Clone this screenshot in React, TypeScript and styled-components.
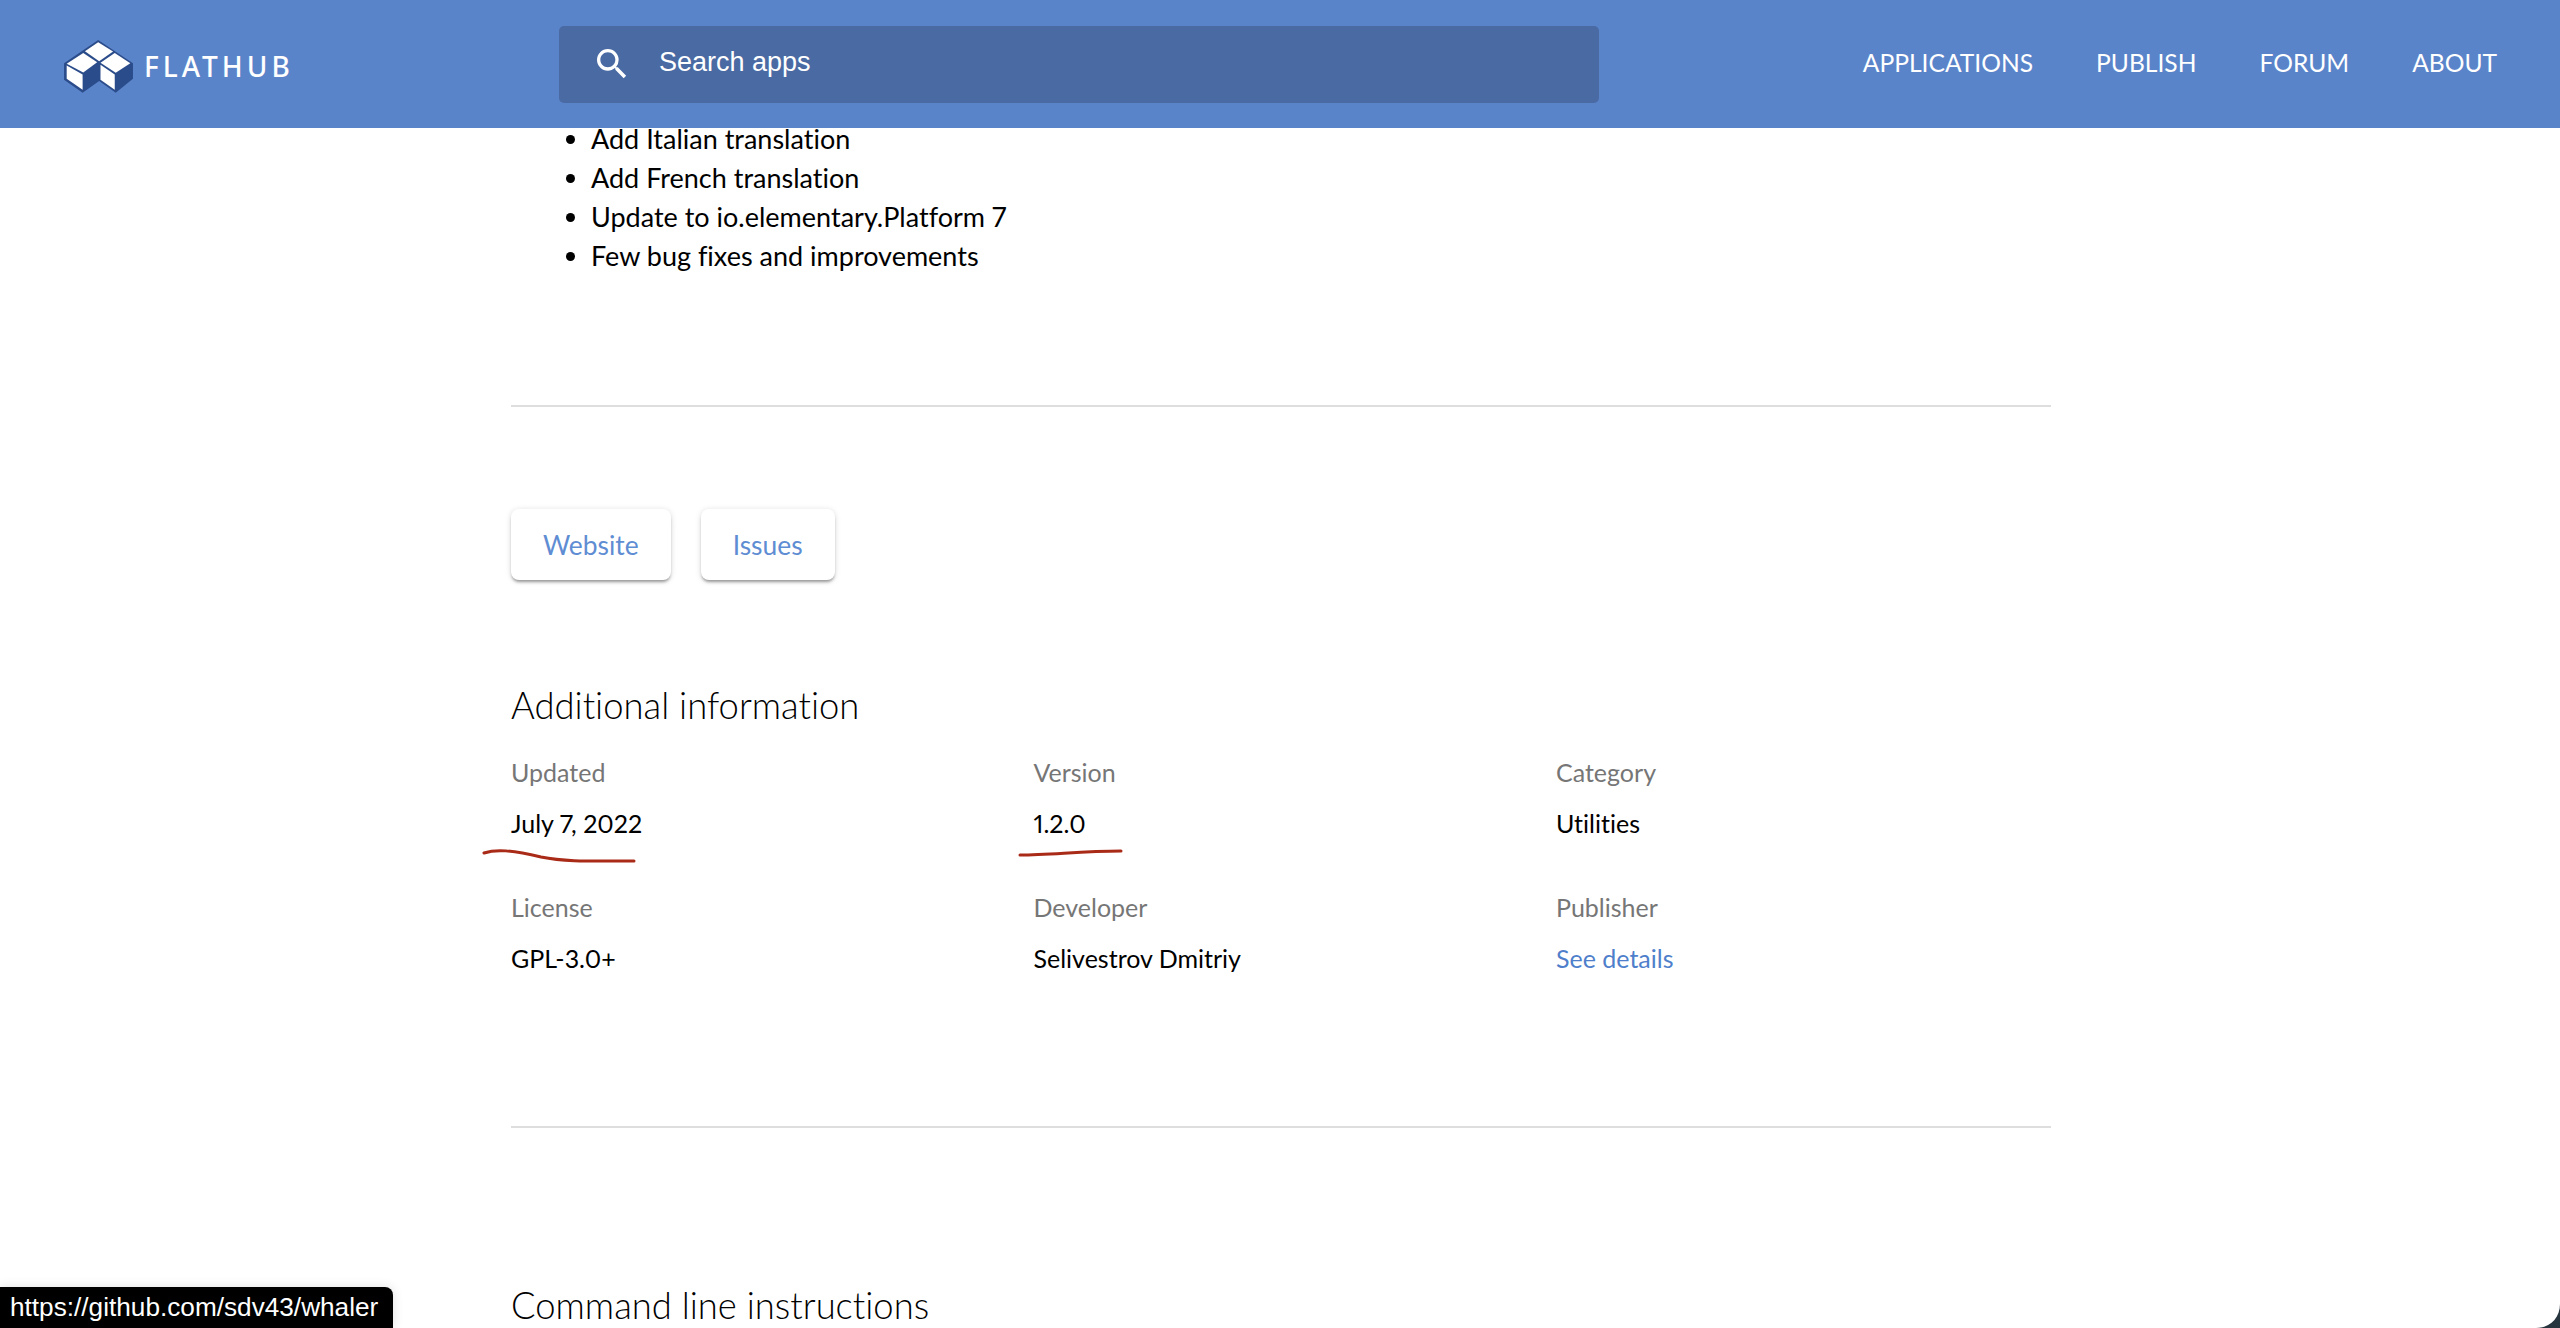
import React from 'react'
import styled, { createGlobalStyle } from 'styled-components'

const bodyFont = `Lato, 'Noto Sans', sans-serif`

const GlobalStyle = createGlobalStyle`
  html, body {
    margin: 0;
    padding: 0;
    background: #ffffff;
  }
  body {
    font-family: ${bodyFont};
    font-variant-ligatures: none;
    font-variant-numeric: proportional-nums;
    color: #000000;
  }
`

const fields = [
  { label: 'Updated', value: 'July 7, 2022' },
  { label: 'Version', value: '1.2.0' },
  { label: 'Category', value: 'Utilities' },
  { label: 'License', value: 'GPL-3.0+' },
  { label: 'Developer', value: 'Selivestrov Dmitriy' },
  { label: 'Publisher', value: 'See details', link: true },
]

const changes = [
  'Add Italian translation',
  'Add French translation',
  'Update to io.elementary.Platform 7',
  'Few bug fixes and improvements',
]

function Logo() {
  return (
    <LogoSvg viewBox='72 58 208 160' aria-hidden='true'>
      <path
        fill='#2b4c8a'
        d='M175 58 L280 128 L280 175 L228 217 L178 182 L128 217 L72 178 L72 128 Z'
      />
      <path fill='#ffffff' d='M135 92 L175 65 L220 93 L178 122 Z' />
      <path fill='#ffffff' d='M80 130 L130 97 L172 125 L130 156 Z' />
      <path fill='#ffffff' d='M182 127 L225 97 L272 128 L228 157 Z' />
      <path fill='#ffffff' d='M80 135 L128 162 L128 208 L80 175 Z' />
      <path fill='#ffffff' d='M182 133 L225 162 L225 208 L182 178 Z' />
    </LogoSvg>
  )
}

function SearchIcon() {
  return (
    <SearchSvg viewBox='0 0 24 24' aria-hidden='true'>
      <path
        fill='#ffffff'
        d='M15.5 14h-.79l-.28-.27A6.47 6.47 0 0 0 16 9.5 6.5 6.5 0 1 0 9.5 16c1.61 0 3.09-.59 4.23-1.57l.27.28v.79l5 4.99L20.49 19l-4.99-5zm-6 0C7.01 14 5 11.99 5 9.5S7.01 5 9.5 5 14 7.01 14 9.5 11.99 14 9.5 14z'
      />
    </SearchSvg>
  )
}

export default function App() {
  return (
    <Page>
      <GlobalStyle />
      <Header>
        <Brand>
          <Logo />
          <BrandName>FLATHUB</BrandName>
        </Brand>
        <SearchBox>
          <SearchIcon />
          <SearchText>Search apps</SearchText>
        </SearchBox>
        <Nav>
          <NavLink href='#'>Applications</NavLink>
          <NavLink href='#'>Publish</NavLink>
          <NavLink href='#'>Forum</NavLink>
          <NavLink href='#'>About</NavLink>
        </Nav>
      </Header>
      <Main>
        <ChangeList>
          {changes.map((c) => (
            <li key={c}>{c}</li>
          ))}
        </ChangeList>
        <Rule $top={130} />
        <Buttons>
          <LinkButton href='#'>Website</LinkButton>
          <LinkButton href='#'>Issues</LinkButton>
        </Buttons>
        <Heading $top={101}>Additional information</Heading>
        <InfoGrid>
          {fields.map((f) => (
            <Field key={f.label}>
              <FieldLabel>{f.label}</FieldLabel>
              <FieldValue $link={f.link}>{f.value}</FieldValue>
            </Field>
          ))}
          <Scribble viewBox='0 0 660 30' aria-hidden='true'>
            <path d='M3 7 C 15 3, 30 4, 60 11 C 85 16, 110 15, 153 15' />
            <path d='M539 9 C 570 9, 600 5, 640 5' />
          </Scribble>
        </InfoGrid>
        <Rule $top={149} />
        <Heading $top={153}>Command line instructions</Heading>
      </Main>
      <StatusBubble>https://github.com/sdv43/whaler</StatusBubble>
      <CornerSvg viewBox='0 0 24 24' aria-hidden='true'>
        <path fill='#27353f' d='M24 0 L24 24 L0 24 C 14 24, 24 14, 24 0 Z' />
      </CornerSvg>
    </Page>
  )
}

const Page = styled.div`
  position: relative;
  height: 1328px;
  overflow: hidden;
  background: #ffffff;
`

const Header = styled.header`
  display: flex;
  align-items: center;
  height: 128px;
  padding: 0 63px 0 64px;
  box-sizing: border-box;
  background: #5a84ca;
  color: #ffffff;
`

const Brand = styled.div`
  display: flex;
  align-items: center;
  gap: 11px;
  width: 495px;
  flex: none;
  padding-top: 4px;
  box-sizing: border-box;
`

const LogoSvg = styled.svg`
  width: 69px;
  height: 53px;
  flex: none;
`

const BrandName = styled.span`
  font-family: 'Noto Sans', sans-serif;
  font-size: 28px;
  font-weight: 500;
  letter-spacing: 4px;
  line-height: 1;
`

const SearchBox = styled.div`
  display: flex;
  align-items: center;
  width: 1040px;
  height: 77px;
  padding: 0 0 0 33px;
  box-sizing: border-box;
  flex: none;
  background: #4a6aa3;
  border-radius: 5px;
`

const SearchSvg = styled.svg`
  width: 40px;
  height: 40px;
  flex: none;
`

const SearchText = styled.span`
  margin-left: 27px;
  font-family: 'Liberation Sans', Arial, sans-serif;
  font-size: 27px;
  margin-top: -3px;
`

const Nav = styled.nav`
  display: flex;
  gap: 63px;
  margin-left: auto;
  margin-top: -1px;
`

const NavLink = styled.a`
  color: #ffffff;
  text-decoration: none;
  text-transform: uppercase;
  font-family: ${bodyFont};
  font-size: 24.6px;
  font-weight: 400;
  line-height: 1;
`

const Main = styled.main`
  width: 1540px;
  margin: -9px auto 0;
  transform: translateX(1px);
`

const ChangeList = styled.ul`
  margin: 0;
  padding: 0 0 0 80px;
  font-size: 27px;
  line-height: 39px;
`

const Rule = styled.hr<{ $top: number }>`
  border: 0;
  height: 2px;
  margin: ${(p) => p.$top}px 0 0;
  background: #dedede;
`

const Buttons = styled.div`
  display: flex;
  gap: 30px;
  margin-top: 102px;
`

const LinkButton = styled.a`
  display: flex;
  align-items: center;
  height: 71px;
  padding: 0 32px;
  background: #ffffff;
  border-radius: 8px;
  box-shadow: 0 3px 3px -1px rgba(0, 0, 0, 0.35), 0 1px 6px rgba(0, 0, 0, 0.14);
  color: #5f8dd3;
  font-size: 26.4px;
  text-decoration: none;
`

const Heading = styled.h2<{ $top: number }>`
  margin: ${(p) => p.$top}px 0 0;
  font-size: 36.4px;
  font-weight: 300;
  line-height: 48px;
  color: #000000;
`

const InfoGrid = styled.div`
  position: relative;
  display: grid;
  grid-template-columns: repeat(3, 522.5px);
  row-gap: 47px;
  margin-top: 25px;
`

const Field = styled.div`
  display: flex;
  flex-direction: column;
  gap: 14px;
`

const FieldLabel = styled.span`
  color: #767676;
  font-size: 25px;
  line-height: 37px;
`

const FieldValue = styled.span<{ $link?: boolean }>`
  color: ${(p) => (p.$link ? '#4f7fcb' : '#000000')};
  font-size: 25px;
  line-height: 37px;
`

const Scribble = styled.svg`
  position: absolute;
  left: -30px;
  top: 92px;
  width: 660px;
  height: 30px;
  overflow: visible;
  pointer-events: none;
  path {
    fill: none;
    stroke: #a92a17;
    stroke-width: 3px;
    stroke-linecap: round;
  }
`

const StatusBubble = styled.div`
  position: absolute;
  left: 0;
  bottom: 0;
  width: 393px;
  height: 41px;
  padding-left: 10px;
  box-sizing: border-box;
  background: #000000;
  border-top-right-radius: 8px;
  color: #ffffff;
  font-family: 'Liberation Sans', Arial, sans-serif;
  font-size: 26.2px;
  line-height: 40px;
  white-space: nowrap;
  box-shadow: 0 0 12px rgba(0, 0, 0, 0.12);
`

const CornerSvg = styled.svg`
  position: absolute;
  right: 0;
  bottom: 0;
  width: 24px;
  height: 24px;
`
